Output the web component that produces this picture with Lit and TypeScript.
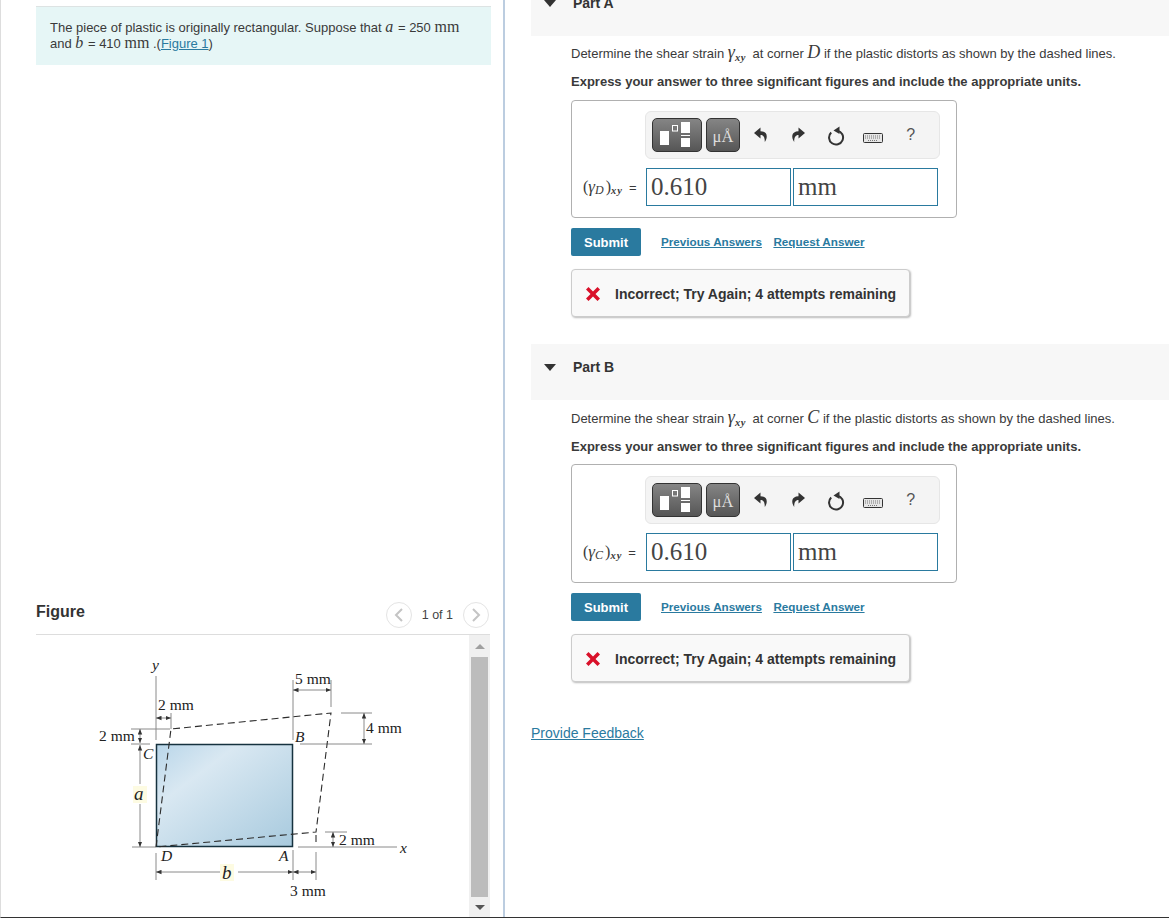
import { LitElement, html, css, svg } from "lit";
import { customElement } from "lit/decorators.js";

const undoPath = "M6.500 0.500 L0 6 L6.500 11.500 L6.500 8 C9.500 8 10.800 10 10.800 15 C13.800 10.500 14 4.500 6.500 4.200 Z";

@customElement("app-root")
export class AppRoot extends LitElement {
  static styles = css`
    :host { display: block; height: 918px; overflow: hidden; font-family: "Liberation Sans", Arial, sans-serif; color: #3a3a3a; font-size: 13px; }
    .page { display: flex; height: 918px; box-sizing: border-box; border-bottom: 1px solid #333; border-left: 1px solid #ddd; overflow: hidden; background: #fff; }
    .left { width: 504px; flex: none; box-sizing: border-box; padding: 6px 12px 0 35px; border-right: 2px solid #bccde0; display: flex; flex-direction: column; justify-content: space-between; }
    .right { flex: 1; min-width: 0; padding-left: 26px; margin-top: -20px; }
    .intro { background: #e6f6f6; border-top: 1px solid #dde3e3; padding: 13px 14px 0; line-height: 16px; height: 59px; box-sizing: border-box; white-space: nowrap; }
    .intro .mi { font-size: 16px; margin-right: 1px; }
    .mi { font-family: "Liberation Serif", "Times New Roman", serif; font-style: italic; font-size: 18px; line-height: 0; }
    .mr { font-family: "Liberation Serif", "Times New Roman", serif; font-size: 16px; line-height: 0; }
    a { color: #2a7a9f; text-decoration: underline; }
    .fig-head { display: flex; align-items: center; height: 26px; padding-bottom: 6px; border-bottom: 1px solid #ddd; margin-right: 1px; }
    .fig-title { font-weight: bold; font-size: 16px; flex: 1; color: #333; margin-top: -6px; }
    .pager { display: flex; align-items: center; gap: 10px; margin-top: -1px; padding-right: 1px; color: #444; font-size: 12.500px; }
    .circle { width: 24px; height: 24px; border: 1px solid #e4e4e4; border-radius: 50%; display: flex; align-items: center; justify-content: center; }
    .circle svg { width: 10px; height: 14px; }
    .chev { fill: none; stroke: #c4c4c4; stroke-width: 2; }
    .scroller { display: flex; height: 282px; margin-right: 1px; }
    .figure { width: 433px; height: 282px; display: block; flex: none; }
    .scrollbar { width: 21px; background: #f0f0f0; display: flex; flex-direction: column; align-items: center; }
    .sb-btn { height: 22px; width: 100%; display: flex; align-items: center; justify-content: center; }
    .sb-btn.bottom { height: 20px; }
    .sb-thumb { flex: 1; width: 17px; background: #bcbcbc; }
    .tri { width: 10px; height: 5px; display: block; }
    .g { stroke: #8a8a8a; stroke-width: 1; fill: none; }
    .d { stroke: #2c2c2c; stroke-width: 1.1; fill: none; stroke-dasharray: 7 4; }
    .t { font-family: "Liberation Serif", "Times New Roman", serif; font-size: 15.5px; fill: #222; }
    .i { font-style: italic; }
    .big { font-size: 19px; }
    .hl { fill: #fdfbe2; }
    .part { height: 365px; }
    .part-head { height: 56px; background: #f7f7f7; display: flex; align-items: center; padding-bottom: 10px; box-sizing: border-box; }
    .part + .part .part-head { margin-top: -1px; margin-bottom: 1px; }
    .caret { width: 12px; height: 7px; margin-left: 13px; margin-right: 17px; }
    .part-title { font-weight: bold; color: #333; font-size: 14px; }
    .body { padding: 9px 0 0 40px; }
    .q { height: 18px; line-height: 18px; white-space: nowrap; }
    .express { font-weight: bold; margin-top: 10px; }
    .sub { font-size: 10.500px; font-family: "Liberation Serif", serif; font-style: italic; font-weight: bold; vertical-align: -3px; line-height: 0; letter-spacing: 0.5px; margin-right: 3px; }
    .gamma { font-family: "Liberation Serif", serif; font-style: italic; font-size: 18px; line-height: 0; }
    .answer { width: 386px; height: 118px; box-sizing: border-box; margin-top: 9px; border: 1px solid #b0b0b0; border-radius: 4px; padding: 10px 16px 0 11px; }
    .part + .part .answer { height: 119px; margin-top: 8px; padding-top: 11px; }
    .toolbar { margin-left: 62px; height: 48px; box-sizing: border-box; background: #f4f4f4; border: 1px solid #e6e6e6; border-radius: 6px; display: flex; align-items: center; padding-left: 6px; }
    .tbtn { height: 34px; box-sizing: border-box; background: linear-gradient(#858585, #565656); border: 1px solid #333; border-radius: 5px; display: flex; align-items: center; justify-content: center; color: #dedede; font-family: "Liberation Serif", serif; font-size: 16.500px; }
    .tbtn.tpl { width: 50px; margin-right: 4px; }
    .tbtn.unit { width: 34px; padding-top: 3px; }
    .tbtn svg { width: 48px; height: 32px; }
    .ticon { width: 37.500px; height: 32px; flex: none; display: flex; align-items: center; justify-content: center; }
    .ticon svg { display: block; }
    .ticon.reset svg { margin-top: 2px; }
    .ticon.keys svg { margin-top: 5px; }
    .ic { fill: #333; }
    .ring { fill: none; stroke: #333; stroke-width: 2; }
    .key { fill: #e6e6e6; stroke: #333; stroke-width: 1; }
    .keydots { stroke: #777; stroke-width: 1; stroke-dasharray: 1 1; fill: none; }
    .help { color: #555; font-size: 16px; }
    .gap-undo { margin-left: 2px; }
    .eq-row { display: flex; align-items: center; margin-top: 9px; }
    .eq-label { width: 63px; flex: none; white-space: nowrap; font-size: 13px; }
    .paren { font-family: "Liberation Serif", serif; font-size: 16px; }
    .eq-label .gamma { font-size: 17px; }
    .sub2 { font-family: "Liberation Serif", serif; font-style: italic; font-size: 12px; vertical-align: -2px; line-height: 0; margin-right: 2px; }
    .sub3 { font-family: "Liberation Serif", serif; font-style: italic; font-size: 10.500px; font-weight: bold; vertical-align: -2px; line-height: 0; letter-spacing: 1px; margin-right: 6px; }
    .field { width: 145px; height: 38px; box-sizing: border-box; border: 1px solid #2a7a9f; font-family: "Liberation Serif", serif; font-size: 25px; color: #444; padding: 3px 4px 0; line-height: 30px; flex: none; }
    .field + .field { margin-left: 2px; }
    .actions { display: flex; align-items: center; margin-top: 10px; }
    .submit { width: 70px; height: 28px; background: #2a7a9f; color: #fff; font-weight: bold; border-radius: 2px; display: flex; align-items: center; justify-content: center; margin-right: 20px; }
    .link { font-size: 11.700px; font-weight: bold; margin-right: 11.500px; margin-top: -2px; }
    .fb { width: 339px; height: 48px; box-sizing: border-box; margin-top: 13px; border: 1px solid #ccc; border-radius: 4px; background: #f9f9f9; box-shadow: 1px 1px 2px #bbb; display: flex; align-items: center; padding: 1px 0 0 14px; font-weight: bold; color: #333; white-space: nowrap; font-size: 14px; }
    .fb svg { width: 14px; height: 14px; margin-right: 15px; flex: none; }
    .x { fill: #d9112a; }
    .feedback { margin-top: 15px; height: 18px; line-height: 18px; font-size: 14px; }
  `;

  private part(name: string, corner: string) {
    return html`<section class="part">
      <div class="part-head">
        <svg class="caret" viewBox="0 0 12 7"><path class="ic" d="M0 0H12L6 7Z"></path></svg>
        <span class="part-title">${name}</span>
      </div>
      <div class="body">
        <div class="q">Determine the shear strain <span class="gamma">γ</span><span class="sub">xy</span> at corner <span class="mi">${corner}</span> if the plastic distorts as shown by the dashed lines.</div>
        <div class="q express">Express your answer to three significant figures and include the appropriate units.</div>
        <div class="answer">
          <div class="toolbar">
            <div class="tbtn tpl"><svg viewBox="0 0 48 32">
              <rect x="7" y="12" width="9" height="14" fill="#fff"></rect>
              <rect x="19.5" y="6.5" width="5" height="5.5" fill="none" stroke="#fff"></rect>
              <rect x="28" y="3" width="9" height="11" fill="#fff"></rect>
              <rect x="28" y="16" width="9" height="1" fill="#fff"></rect>
              <rect x="28" y="19" width="9" height="9" fill="#fff"></rect>
            </svg></div>
            <div class="tbtn unit">μÅ</div>
            <div class="ticon gap-undo"><svg width="14" height="16" viewBox="0 0 14 16"><path class="ic" d=${undoPath}></path></svg></div>
            <div class="ticon"><svg width="14" height="16" viewBox="0 0 14 16"><g transform="translate(14 0) scale(-1 1)"><path class="ic" d=${undoPath}></path></g></svg></div>
            <div class="ticon reset"><svg width="18" height="20" viewBox="0 0 18 20"><path class="ring" d="M4.200 6.500 A7 7 0 1 0 10.500 4.700"></path><path class="ic" d="M6.500 4.500 L12.500 0.500 L12.500 8Z"></path></svg></div>
            <div class="ticon keys"><svg width="20" height="10" viewBox="0 0 20 10"><rect class="key" x="0.500" y="0.500" width="19" height="9" rx="1"></rect><path class="keydots" d="M2 3H18M2 5H18M5 7.500H15"></path></svg></div>
            <div class="ticon help">?</div>
          </div>
          <div class="eq-row">
            <div class="eq-label"><span class="paren">(</span><span class="gamma">γ</span><span class="sub2">${corner}</span><span class="paren">)</span><span class="sub3">xy</span>=</div>
            <div class="field">0.610</div>
            <div class="field">mm</div>
          </div>
        </div>
        <div class="actions">
          <div class="submit">Submit</div>
          <a class="link">Previous Answers</a>
          <a class="link">Request Answer</a>
        </div>
        <div class="fb">
          <svg viewBox="0 0 14 14"><path class="x" d="M0 2.500L2.500 0L7 4.500L11.500 0L14 2.500L9.500 7L14 11.500L11.500 14L7 9.500L2.500 14L0 11.500L4.500 7Z"></path></svg>
          Incorrect; Try Again; 4 attempts remaining
        </div>
      </div>
    </section>`;
  }

  private figure() {
    const lines: [number, number, number, number][] = [
      [156, 676, 156, 740], [171, 713, 171, 729], [131, 729, 170, 729], [131, 744, 150, 744],
      [293, 680, 293, 740], [331, 680, 331, 707], [341, 713, 372, 713],
      [300, 744, 372, 744], [132, 847, 156, 847], [298, 847, 397, 847], [325, 832, 347, 832],
      [316, 852, 316, 880], [156, 853, 156, 880], [293, 850, 293, 880],
    ];
    const arrows: [number, number, number, number][] = [
      [163, 718, 156, 718], [163, 718, 171, 718], [312, 690, 293, 690], [312, 690, 331, 690],
      [364, 728, 364, 713], [364, 728, 364, 744], [333, 840, 333, 832], [333, 840, 333, 847],
      [140, 736, 140, 729], [140, 736, 140, 743], [140, 784, 140, 745], [140, 804, 140, 847],
      [220, 872, 156, 872], [238, 872, 293, 872], [305, 872, 293, 872], [305, 872, 316, 872],
    ];
    const labels: [number, number, string, boolean][] = [
      [152, 670, "y", true], [158, 710, "2 mm", false], [99, 741, "2 mm", false], [143, 759, "C", true],
      [295, 684, "5 mm", false], [295, 742, "B", true], [366, 733, "4 mm", false],
      [339, 845, "2 mm", false], [400, 853, "x", true], [161, 861, "D", true], [279, 861, "A", true],
      [290, 896, "3 mm", false],
    ];
    return html`<svg class="figure" viewBox="36 635 433 282">
      <defs>
        <linearGradient id="plate" x1="0" y1="0" x2="1" y2="1">
          <stop offset="0" stop-color="#b9d6e9"></stop>
          <stop offset="0.3" stop-color="#d9e8f2"></stop>
          <stop offset="1" stop-color="#a8cade"></stop>
        </linearGradient>
        <marker id="ah" markerWidth="6" markerHeight="5" refX="5.500" refY="2.500" orient="auto" markerUnits="userSpaceOnUse">
          <path d="M0 0.300L5.500 2.500L0 4.700Z" fill="#333"></path>
        </marker>
      </defs>
      <rect x="156.500" y="744.500" width="136" height="102" fill="url(#plate)" stroke="#16323f" stroke-width="1.500"></rect>
      ${lines.map(([a, b, c, e]) => svg`<line class="g" x1=${a} y1=${b} x2=${c} y2=${e}></line>`)}
      ${arrows.map(([a, b, c, e]) => svg`<line class="g" x1=${a} y1=${b} x2=${c} y2=${e} marker-end="url(#ah)"></line>`)}
      <path class="d" d="M156 847L171 729L331 713L316 832Z"></path>
      <line class="d" x1="316" y1="835" x2="316" y2="846"></line>
      <rect class="hl" x="133" y="786" width="14" height="17"></rect>
      <rect class="hl" x="220" y="864" width="14" height="17"></rect>
      <text class="t i big" x="134" y="800">a</text>
      <text class="t i big" x="222" y="879">b</text>
      ${labels.map(([x, y, s, it]) => svg`<text class="t ${it ? "i" : ""}" x=${x} y=${y}>${s}</text>`)}
    </svg>`;
  }

  render() {
    return html`<div class="page">
      <div class="left">
        <div class="intro">The piece of plastic is originally rectangular. Suppose that <span class="mi">a</span> = 250 <span class="mr">mm</span><br>and <span class="mi">b</span> = 410 <span class="mr">mm</span> .(<a>Figure 1</a>)</div>
        <div>
          <div class="fig-head">
            <div class="fig-title">Figure</div>
            <div class="pager">
              <div class="circle"><svg viewBox="0 0 10 14"><path class="chev" d="M8 1L2 7L8 13"></path></svg></div>
              <span>1 of 1</span>
              <div class="circle"><svg viewBox="0 0 10 14"><path class="chev" d="M2 1L8 7L2 13"></path></svg></div>
            </div>
          </div>
          <div class="scroller">
            ${this.figure()}
            <div class="scrollbar">
              <div class="sb-btn"><svg class="tri" viewBox="0 0 10 5"><path d="M0 5H10L5 0Z" fill="#a0a0a0"></path></svg></div>
              <div class="sb-thumb"></div>
              <div class="sb-btn bottom"><svg class="tri" viewBox="0 0 10 5"><path d="M0 0H10L5 5Z" fill="#555"></path></svg></div>
            </div>
          </div>
        </div>
      </div>
      <div class="right">
        ${this.part("Part A", "D")}
        ${this.part("Part B", "C")}
        <div class="feedback"><a>Provide Feedback</a></div>
      </div>
    </div>`;
  }
}
